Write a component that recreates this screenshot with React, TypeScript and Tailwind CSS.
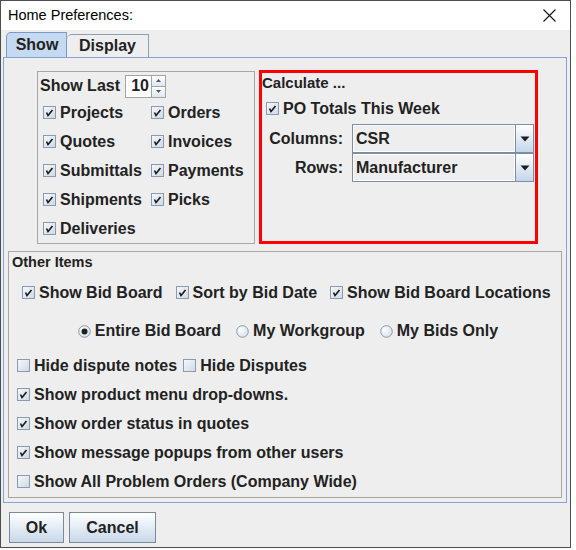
import React from 'react';

const font = "font-['Liberation_Sans',Arial,sans-serif]";

function Box({ checked }: { checked?: boolean }) {
  return (
    <svg width="13" height="13" viewBox="0 0 13 13" className="shrink-0">
      <defs>
        <linearGradient id="cbg" x1="0" y1="0" x2="1" y2="1">
          <stop offset="0" stopColor="#f7f9fc" />
          <stop offset="1" stopColor="#cdd8e4" />
        </linearGradient>
      </defs>
      <rect x="0.5" y="0.5" width="12" height="12" fill="url(#cbg)" stroke="#8a9ab0" />
      {checked && <path d="M3.5 6.5 L5 9.5 L9.5 4" fill="none" stroke="#1a1a1a" strokeWidth="1.6" />}
    </svg>
  );
}

function Check({ label, checked = true }: { label: string; checked?: boolean }) {
  return (
    <div className="flex items-center gap-[4px] whitespace-nowrap">
      <Box checked={checked} />
      <span>{label}</span>
    </div>
  );
}

function Radio({ label, selected }: { label: string; selected?: boolean }) {
  return (
    <div className="flex items-center gap-[4px] whitespace-nowrap">
      <svg width="13" height="13" viewBox="0 0 13 13" className="shrink-0">
        <defs>
          <radialGradient id="rbg" cx="0.35" cy="0.35" r="0.8">
            <stop offset="0" stopColor="#ffffff" />
            <stop offset="1" stopColor="#cfd9e4" />
          </radialGradient>
        </defs>
        <circle cx="6.5" cy="6.5" r="5.8" fill="url(#rbg)" stroke="#8a9ab0" />
        {selected && <circle cx="6.5" cy="6.5" r="3" fill="#1e1e1e" />}
      </svg>
      <span>{label}</span>
    </div>
  );
}

function Combo({ value }: { value: string }) {
  return (
    <div className="flex h-[29px] border border-[#7b8ea3]">
      <div className="flex flex-1 items-center border border-white bg-[#eeeeee] pl-[2px]">{value}</div>
      <div className="flex w-[18px] items-center justify-center border-l border-[#7b8ea3] bg-gradient-to-b from-white to-[#c4d6ea]">
        <svg width="10" height="6" viewBox="0 0 10 6">
          <path d="M0.5 0.5 L9.5 0.5 L5 5.5 Z" fill="#1e1e1e" />
        </svg>
      </div>
    </div>
  );
}

export default function App() {
  const leftItems = [
    ['Projects', 'Orders'],
    ['Quotes', 'Invoices'],
    ['Submittals', 'Payments'],
    ['Shipments', 'Picks'],
    ['Deliveries', ''],
  ];

  return (
    <div className={`${font} bg-white w-[576px] h-[550px] text-[16px] font-bold text-[#222]`}>
      <div className="flex h-[548px] w-[571px] flex-col border border-[#4d4d4d] bg-[#eeeeee]">
        {/* title bar */}
        <div className="flex h-[29px] items-center justify-between bg-white pl-[7px] pr-[14px]">
          <span className="text-[14.5px] font-normal text-black">Home Preferences:</span>
          <svg width="13" height="13" viewBox="0 0 13 13">
            <path d="M0.5 0.5 L12.5 12.5 M12.5 0.5 L0.5 12.5" stroke="#111" strokeWidth="1.1" />
          </svg>
        </div>

        {/* tabs */}
        <div className="flex h-[27px] items-end pl-[5px]">
          <div className="flex h-[25px] w-[61px] items-center justify-center rounded-tl-[5px] border border-b-0 border-[#7a9acc] bg-[#c5d9f1] pl-[1px]">
            Show
          </div>
          <div className="flex h-[23px] w-[82px] items-center justify-center rounded-tl-[5px] border border-b-0 border-l-0 border-[#8d9fb8] bg-[#eeeeee]">
            Display
          </div>
        </div>

        {/* tab panel */}
        <div className="ml-[2px] flex h-[446px] w-[564px] flex-col border border-[#84a3d2]">
          <div className="mt-[12px] flex items-start">
            {/* show last group */}
            <div className="ml-[33px] mt-[1px] h-[173px] w-[218px] border border-[#a7a7a7]">
              <div className="flex items-center gap-[5px] pl-[2px] pt-[2px]">
                <span>Show Last</span>
                <div className="flex h-[23px]">
                  <div className="flex w-[27px] items-center justify-end border border-[#a3a3a3] bg-white pr-[2px]">10</div>
                  <div className="flex w-[14px] flex-col border border-l-0 border-[#a3a3a3]">
                    <div className="flex flex-1 items-center justify-center border-b border-[#a3a3a3] bg-gradient-to-b from-white to-[#dfe7f0]">
                      <svg width="5" height="3" viewBox="0 0 5 3"><path d="M0 3 L2.5 0 L5 3 Z" fill="#555" /></svg>
                    </div>
                    <div className="flex flex-1 items-center justify-center bg-gradient-to-b from-white to-[#dfe7f0]">
                      <svg width="5" height="3" viewBox="0 0 5 3"><path d="M0 0 L5 0 L2.5 3 Z" fill="#555" /></svg>
                    </div>
                  </div>
                </div>
              </div>
              <div className="grid grid-cols-[108px_1fr] pl-[5px]">
                {leftItems.map(([a, b], i) => (
                  <React.Fragment key={i}>
                    <div className="flex h-[29px] items-center"><Check label={a} /></div>
                    <div className="flex h-[29px] items-center">{b && <Check label={b} />}</div>
                  </React.Fragment>
                ))}
              </div>
            </div>

            {/* calculate box */}
            <div className="ml-[4px] h-[174px] w-[279px] border-[3px] border-[#ff0000]">
              <div className="flex h-[20px] items-center text-[15px]">Calculate ...</div>
              <div className="flex h-[31px] items-center pl-[4px]">
                <Check label="PO Totals This Week" />
              </div>
              <div className="grid grid-cols-[81px_182px] gap-x-[9px]">
                <div className="flex h-[29px] items-center justify-end">Columns:</div>
                <Combo value="CSR" />
                <div className="flex h-[29px] items-center justify-end">Rows:</div>
                <Combo value="Manufacturer" />
              </div>
            </div>
          </div>

          {/* other items */}
          <div className="ml-[4px] mt-[7px] h-[247px] w-[554px] border border-[#a7a7a7]">
            <div className="flex h-[22px] items-center pl-[3px] text-[14.5px]">Other Items</div>
            <div className="flex h-[37px] items-center gap-[13px] pl-[13px]">
              <Check label="Show Bid Board" />
              <Check label="Sort by Bid Date" />
              <Check label="Show Bid Board Locations" />
            </div>
            <div className="flex h-[40px] items-center justify-center gap-[15px] pl-[6px]">
              <Radio label="Entire Bid Board" selected />
              <Radio label="My Workgroup" />
              <Radio label="My Bids Only" />
            </div>
            <div className="flex flex-col pl-[8px]">
              <div className="flex h-[29px] items-center gap-[6px]">
                <Check label="Hide dispute notes" checked={false} />
                <Check label="Hide Disputes" checked={false} />
              </div>
              <div className="flex h-[29px] items-center"><Check label="Show product menu drop-downs." /></div>
              <div className="flex h-[29px] items-center"><Check label="Show order status in quotes" /></div>
              <div className="flex h-[29px] items-center"><Check label="Show message popups from other users" /></div>
              <div className="flex h-[29px] items-center"><Check label="Show All Problem Orders (Company Wide)" checked={false} /></div>
            </div>
          </div>
        </div>

        {/* buttons */}
        <div className="mt-[9px] flex gap-[5px] pl-[8px]">
          <button className="h-[31px] w-[55px] border border-[#7a8a9c] bg-gradient-to-b from-white to-[#c8d8ea] font-bold">Ok</button>
          <button className="h-[31px] w-[87px] border border-[#7a8a9c] bg-gradient-to-b from-white to-[#c8d8ea] font-bold">Cancel</button>
        </div>
      </div>
    </div>
  );
}
